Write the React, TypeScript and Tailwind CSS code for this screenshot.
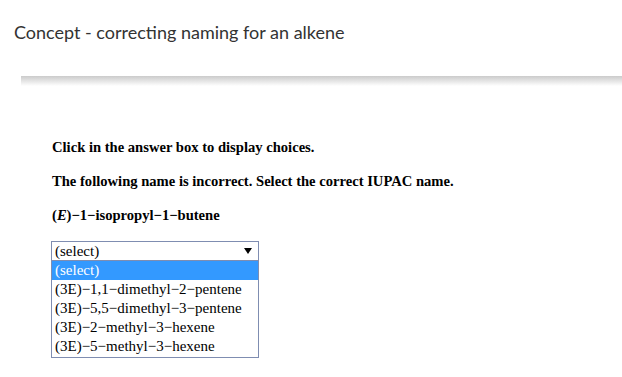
const options = [
  "(select)",
  "(3E)\u22121,1\u2212dimethyl\u22122\u2212pentene",
  "(3E)\u22125,5\u2212dimethyl\u22123\u2212pentene",
  "(3E)\u22122\u2212methyl\u22123\u2212hexene",
  "(3E)\u22125\u2212methyl\u22123\u2212hexene",
];

export default function App() {
  return (
    <div className="min-h-[377px] w-[622px] bg-white overflow-hidden">
      {/* Header */}
      <div className="pl-[14px] pt-[21px] h-[76px]">
        <h1 className="text-[18px] leading-[22px] text-[#333] font-['Lato',sans-serif]">
          Concept - correcting naming for an alkene
        </h1>
      </div>
      <div className="ml-[21px] h-[10px] bg-gradient-to-b from-[#cbcbcb] to-white" />

      {/* Question */}
      <div className="pl-[52px] pt-[52px] font-['Liberation_Serif',serif] text-black">
        <p className="text-[14.6px] leading-[18px] font-bold">
          Click in the answer box to display choices.
        </p>
        <p className="mt-[16px] text-[14.6px] leading-[18px] font-bold">
          The following name is incorrect. Select the correct IUPAC name.
        </p>
        <p className="mt-[16px] text-[14.6px] leading-[18px] font-bold">
          (<i>E</i>){"\u2212"}1{"\u2212"}isopropyl{"\u2212"}1{"\u2212"}butene
        </p>

        {/* Open select */}
        <div className="mt-[17px] -ml-px w-[208px]">
          <div className="h-[20px] border border-[#7f8db1] flex items-center justify-between pl-[3px] pr-[6px] text-[15px] leading-[18px]">
            <span>(select)</span>
            <svg width="8" height="6" viewBox="0 0 8 6">
              <path d="M0 0h8L4 6z" fill="#000" />
            </svg>
          </div>
          <div className="border border-t-0 border-[#7f8db1] pb-px text-[15px] leading-[19px]">
            {options.map((o, i) => (
              <div
                key={o}
                className={
                  i === 0
                    ? "pl-[3px] bg-[#3399ff] text-white"
                    : "pl-[3px] text-black"
                }
              >
                {o}
              </div>
            ))}
          </div>
        </div>
      </div>
    </div>
  );
}
